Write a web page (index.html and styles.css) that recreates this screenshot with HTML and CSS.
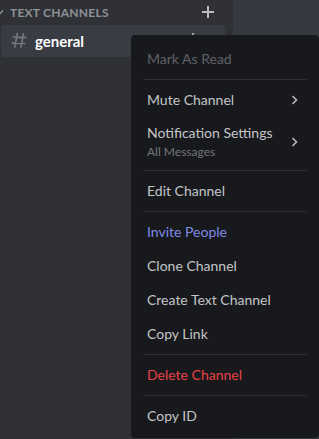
FILE: index.html
```html
<!DOCTYPE html>
<html lang="en">
<head>
    <meta charset="UTF-8">
    <title>Channel Menu</title>
    <link rel="stylesheet" href="styles.css">
</head>
<body>

<div class="app">
    <div class="sidebar">
        <div class="category">
            <svg class="caret" width="12" height="12" viewBox="0 0 12 12"><path d="M2 4.5 6 8.5 10 4.5" fill="none" stroke="#8e9297" stroke-width="1.5"/></svg>
            <span class="category-name">Text Channels</span>
            <svg class="add" width="12" height="12" viewBox="0 0 12 12"><path d="M6 0v12M0 6h12" stroke="#b9bbbe" stroke-width="2"/></svg>
        </div>

        <div class="channel">
            <svg class="hash" width="18" height="18" viewBox="0 0 24 24"><path fill="#72767d" d="M5.9 21a.6.6 0 0 1-.6-.7l.7-4.3H2.6a.6.6 0 0 1-.6-.7l.2-1a.6.6 0 0 1 .6-.5h3.6l1.1-6H4.1a.6.6 0 0 1-.6-.7l.2-1a.6.6 0 0 1 .6-.5h3.6l.8-4.1a.6.6 0 0 1 .6-.5h1a.6.6 0 0 1 .6.7L10.1 6h6l.7-4.1a.6.6 0 0 1 .6-.5h1a.6.6 0 0 1 .6.7L18.3 6h3.4a.6.6 0 0 1 .6.7l-.2 1a.6.6 0 0 1-.6.5h-3.6l-1.1 6h3.4a.6.6 0 0 1 .6.7l-.2 1a.6.6 0 0 1-.6.5h-3.6l-.8 4.1a.6.6 0 0 1-.6.5h-1a.6.6 0 0 1-.6-.7l.7-3.9h-6l-.8 4.1a.6.6 0 0 1-.6.5zM9.7 8.5l-1.1 6h6l1.1-6z"/></svg>
            <span class="channel-name">general</span>
            <svg class="invite" width="16" height="16" viewBox="0 0 16 16"><path d="M8 0v6M5 3h6" stroke="#dcddde" stroke-width="1.3"/><circle cx="8" cy="10" r="2.5" fill="#dcddde"/></svg>
        </div>
    </div>

    <div class="menu">
        <div class="item disabled">Mark As Read</div>
        <div class="separator"></div>
        <div class="item">
            <span>Mute Channel</span>
            <svg class="chevron" width="18" height="18" viewBox="0 0 18 18"><path d="M7.5 5 11.5 9 7.5 13" fill="none" stroke="#b9bbbe" stroke-width="1.6"/></svg>
        </div>
        <div class="item">
            <div class="label">
                <div>Notification Settings</div>
                <div class="subtext">All Messages</div>
            </div>
            <svg class="chevron" width="18" height="18" viewBox="0 0 18 18"><path d="M7.5 5 11.5 9 7.5 13" fill="none" stroke="#b9bbbe" stroke-width="1.6"/></svg>
        </div>
        <div class="separator"></div>
        <div class="item">Edit Channel</div>
        <div class="separator"></div>
        <div class="item brand">Invite People</div>
        <div class="item">Clone Channel</div>
        <div class="item">Create Text Channel</div>
        <div class="item">Copy Link</div>
        <div class="separator"></div>
        <div class="item danger">Delete Channel</div>
        <div class="separator"></div>
        <div class="item">Copy ID</div>
    </div>
</div>

</body>
</html>
```

FILE: styles.css
```css
body {
    margin: 0;
    background-color: #36393f;
    font-family: Lato, "Noto Sans", sans-serif;
    overflow: hidden;
}
.app {
    position: relative;
    height: 439px;
}
.sidebar {
    width: 233px;
    height: 100%;
    background-color: #2f3136;
}
.category {
    display: flex;
    align-items: center;
    height: 24px;
    padding-right: 19px;
}
.caret {
    margin-left: -7px;
    margin-right: 5px;
}
.category-name {
    flex: 1;
    color: #8e9297;
    font-size: 12px;
    font-weight: bold;
    text-transform: uppercase;
    letter-spacing: 0.02em;
}
.channel {
    position: relative;
    display: flex;
    align-items: center;
    height: 32px;
    margin: 1px 8px 0 1px;
    padding-left: 9px;
    background-color: #393c43;
    border-radius: 4px;
}
.hash {
    margin-right: 7px;
}
.channel-name {
    color: #fff;
    font-size: 15px;
    font-weight: bold;
}
.invite {
    position: absolute;
    left: 184px;
    top: 8px;
}
.menu {
    position: absolute;
    left: 131px;
    top: 35px;
    width: 188px;
    box-sizing: border-box;
    padding: 8px 8px 6px;
    display: flex;
    flex-direction: column;
    gap: 2px;
    background-color: #18191c;
    border-radius: 4px;
}
.item {
    display: flex;
    align-items: center;
    justify-content: space-between;
    min-height: 32px;
    box-sizing: border-box;
    padding: 6px 8px;
    color: #c3c5c8;
    font-size: 14px;
    line-height: 18px;
}
.item.disabled {
    color: #5f6167;
}
.item.brand {
    color: #7f8ae6;
}
.item.danger {
    color: #e84346;
}
.subtext {
    margin-top: 2px;
    color: #72767d;
    font-size: 12px;
    line-height: 16px;
}
.separator {
    height: 1px;
    margin: 2px 4px;
    background-color: #2e3035;
}
```
